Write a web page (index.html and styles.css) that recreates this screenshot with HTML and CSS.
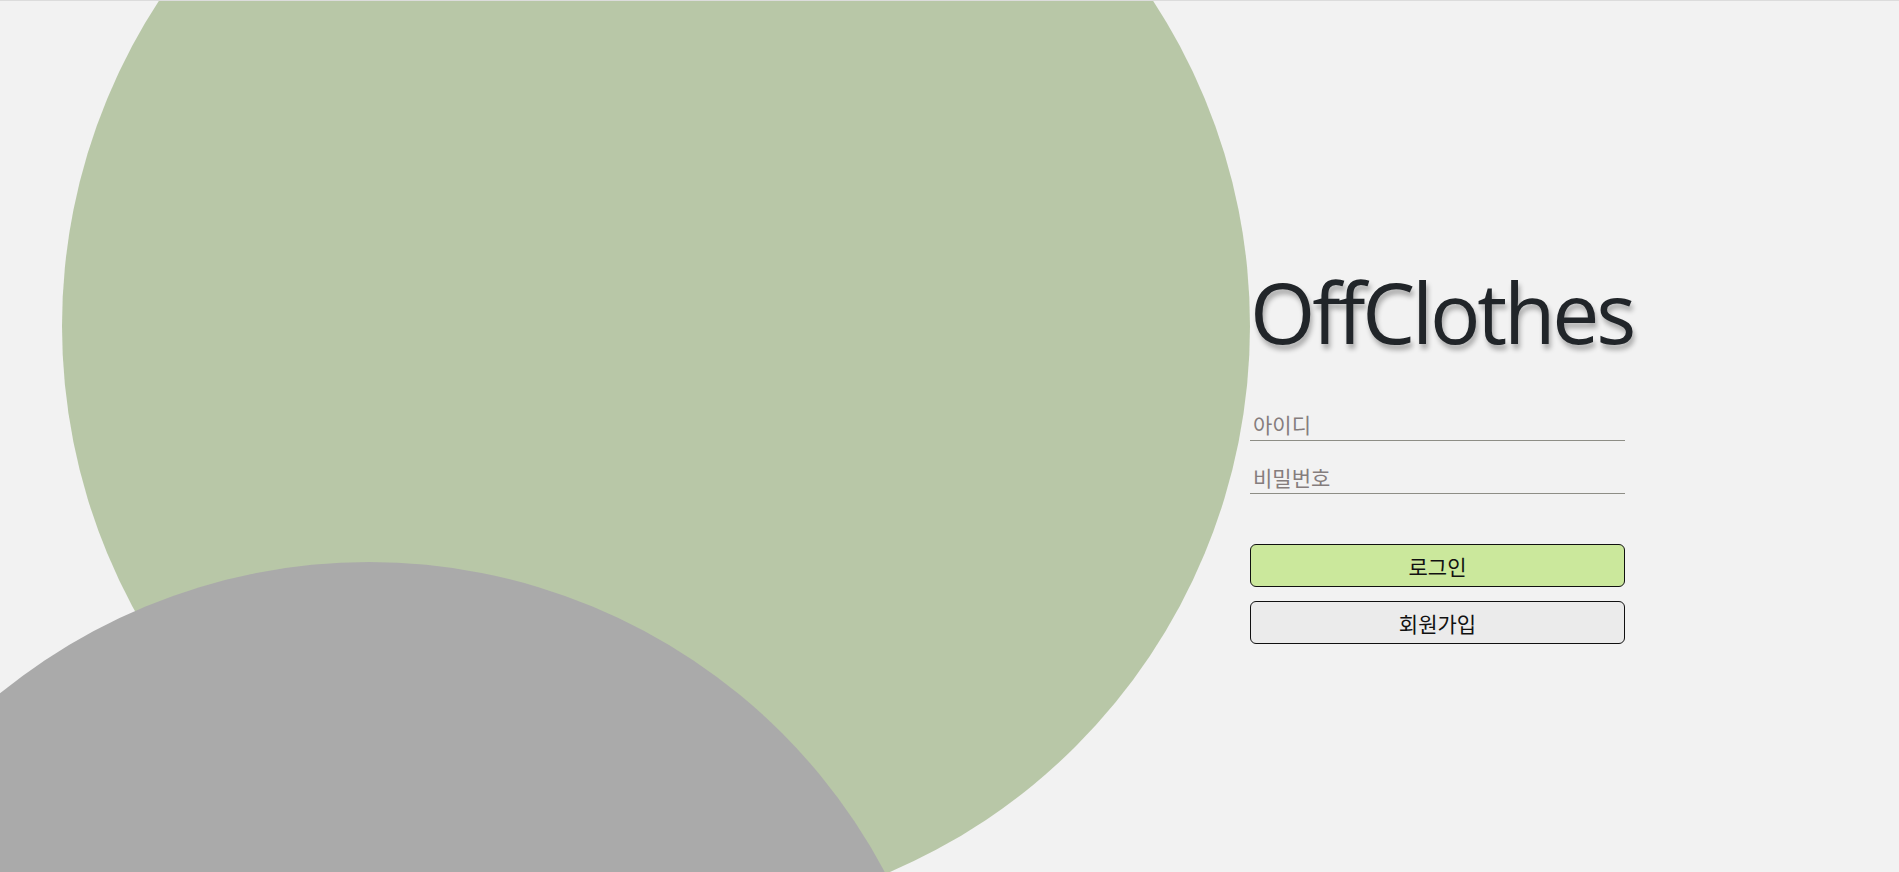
FILE: index.html
```html
<!DOCTYPE html>
<html lang="ko">
<head>
<meta charset="utf-8">
<title>OffClothes</title>
<link rel="stylesheet" href="styles.css">
</head>
<body>
<div class="page">
  <div class="blob blob-green"></div>
  <div class="blob blob-gray"></div>
  <main class="login">
    <h1 class="brand">OffClothes</h1>
    <form class="login-form">
      <input class="field" type="text" placeholder="아이디">
      <input class="field" type="password" placeholder="비밀번호">
      <div class="actions">
        <button class="btn btn-login" type="button">로그인</button>
        <button class="btn btn-join" type="button">회원가입</button>
      </div>
    </form>
  </main>
</div>
</body>
</html>
```
FILE: styles.css
```css
html, body {
  margin: 0;
  padding: 0;
}
body {
  background: #f2f2f2;
  font-family: "Open Sans", "Noto Sans CJK KR", sans-serif;
}
.page {
  position: relative;
  width: 1899px;
  height: 872px;
  overflow: hidden;
  border-top: 1px solid #dcdcdc;
  box-sizing: border-box;
}
.blob {
  position: absolute;
  border-radius: 50%;
}
.blob-green {
  background: #b8c7a7;
  left: 62px;
  top: -269px;
  width: 1188px;
  height: 1188px;
}
.blob-gray {
  background: #aaaaaa;
  left: -215px;
  top: 561px;
  width: 1168px;
  height: 1168px;
}
.login {
  position: relative;
  z-index: 1;
  margin-left: 1250px;
  width: 375px;
  padding-top: 261px;
  display: flex;
  flex-direction: column;
}
.brand {
  margin: 0 0 46px 0;
  font-family: "Open Sans", sans-serif;
  font-weight: 400;
  font-size: 84px;
  line-height: 100px;
  letter-spacing: -3.2px;
  color: #212529;
  text-shadow: 2px 5px 5px rgba(0, 0, 0, 0.3);
  white-space: nowrap;
}
.login-form {
  display: flex;
  flex-direction: column;
  gap: 20px;
}
.field {
  height: 33px;
  box-sizing: border-box;
  border: none;
  border-bottom: 1px solid #8e8e86;
  background: transparent;
  padding: 0 3px;
  font-family: "Noto Sans CJK KR", sans-serif;
  font-size: 21px;
  color: #333;
  outline: none;
}
.field::placeholder {
  color: #857d7d;
}
.actions {
  margin-top: 30px;
  display: flex;
  flex-direction: column;
  gap: 14px;
}
.btn {
  height: 43px;
  box-sizing: border-box;
  border: 1px solid #111;
  border-radius: 6px;
  font-family: "Noto Sans CJK KR", sans-serif;
  font-size: 21px;
  color: #111;
  cursor: pointer;
  padding: 0;
}
.btn-login {
  background: #cbe89c;
}
.btn-join {
  background: #ebebeb;
}
```
